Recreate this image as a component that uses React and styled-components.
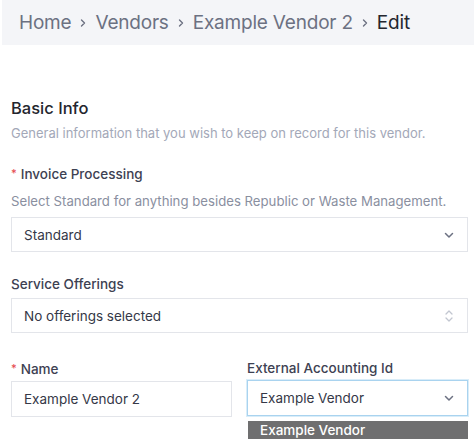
import styled, { createGlobalStyle } from 'styled-components'

const GlobalStyle = createGlobalStyle`
	html, body { margin: 0; padding: 0; background: #ffffff; }
	body { font-family: Inter, "Open Sans", sans-serif; }
`

const Page = styled.div`
	width: 474px;
	height: 445px;
	overflow: hidden;
	background: #fff;
`

const Breadcrumb = styled.nav`
	display: flex;
	align-items: center;
	gap: 8px;
	height: 45px;
	margin-left: 2px;
	padding: 0 17px;
	background: #f4f5f8;
	font-size: 19px;
	letter-spacing: -0.2px;
	color: #6c7182;
`

const Crumb = styled.span`
	color: ${props => props.current ? '#24262f' : '#6c7182'};
`

const Sep = styled.span`
	display: flex;
	align-items: center;
`

const Section = styled.section`
	padding: 52px 6px 0 11px;
`

const Title = styled.h2`
	margin: 0;
	font-size: 16.5px;
	font-weight: 500;
	color: #23252d;
	line-height: 22px;
`

const Subtitle = styled.p`
	margin: 5px 0 0;
	font-size: 13px;
	color: #a3a8b8;
	line-height: 18px;
`

const Field = styled.div`
	margin-top: ${props => props.top || 0}px;
	display: flex;
	flex-direction: column;
`

const Label = styled.label`
	font-size: 13.5px;
	font-weight: 500;
	color: #3d4152;
	line-height: 18px;
`

const Req = styled.span`
	color: #e5484d;
	font-size: 11px;
	vertical-align: 2px;
	margin-right: 4px;
`

const Help = styled.div`
	margin-top: 9px;
	font-size: 13.2px;
	color: #8a8f9f;
	line-height: 18px;
`

const Box = styled.div`
	margin-top: ${props => props.gap || 0}px;
	height: ${props => props.h || 35}px;
	box-sizing: border-box;
	display: flex;
	align-items: center;
	justify-content: space-between;
	padding: 0 12px 0 12px;
	border: 1px solid ${props => props.focus ? '#a9d3ef' : '#e3e5ea'};
	box-shadow: ${props => props.focus ? '0 0 0 1px #d9edf9' : 'none'};
	font-size: 13.5px;
	color: #353847;
	background: #fff;
`

const Row = styled.div`
	margin-top: 26px;
	display: grid;
	grid-template-columns: 221px 221px;
	gap: 15px;
`

const Cell = styled.div`
	position: relative;
	display: flex;
	flex-direction: column;
`

// the open option list of the focused select
const Menu = styled.div`
	position: absolute;
	left: 1px;
	right: 0;
	top: 62px;
	height: 18px;
	padding-left: 12px;
	display: flex;
	align-items: center;
	background: #6f6f70;
	color: #fff;
	font-size: 13.5px;
	font-weight: 500;
`

function Chevron() {
	return (
		<svg width="12" height="12" viewBox="0 0 12 12" fill="none" stroke="#6c7182" strokeWidth="1.5" strokeLinecap="round" strokeLinejoin="round">
			<path d="M2.5 4.5 L6 8 L9.5 4.5" />
		</svg>
	)
}

function Arrow() {
	return (
		<svg width="8" height="12" viewBox="0 0 8 12" fill="none" stroke="#6c7182" strokeWidth="1.4" strokeLinecap="round" strokeLinejoin="round">
			<path d="M2.5 3 L5.5 6 L2.5 9" />
		</svg>
	)
}

function UpDown() {
	return (
		<svg width="12" height="16" viewBox="0 0 12 16" fill="none" stroke="#c2c6d0" strokeWidth="1.3" strokeLinecap="round" strokeLinejoin="round">
			<path d="M3 6 L6 3 L9 6" />
			<path d="M3 10 L6 13 L9 10" />
		</svg>
	)
}

export default function App() {
	return (
		<Page>
			<GlobalStyle />
			<Breadcrumb>
				<Crumb>Home</Crumb><Sep><Arrow /></Sep>
				<Crumb>Vendors</Crumb><Sep><Arrow /></Sep>
				<Crumb>Example Vendor 2</Crumb><Sep><Arrow /></Sep>
				<Crumb current>Edit</Crumb>
			</Breadcrumb>

			<Section>
				<Title>Basic Info</Title>
				<Subtitle>General information that you wish to keep on record for this vendor.</Subtitle>

				<Field top={22}>
					<Label><Req>*</Req>Invoice Processing</Label>
					<Help>Select Standard for anything besides Republic or Waste Management.</Help>
					<Box gap={7}>Standard<Chevron /></Box>
				</Field>

				<Field top={23}>
					<Label>Service Offerings</Label>
					<Box gap={5}>No offerings selected<UpDown /></Box>
				</Field>

				<Row>
					<Cell>
						<Label><Req>*</Req>Name</Label>
						<Box gap={3} h={36}>Example Vendor 2</Box>
					</Cell>
					<Cell>
						<Label>External Accounting Id</Label>
						<Box gap={3} h={36} focus>Example Vendor<Chevron /></Box>
						<Menu>Example Vendor</Menu>
					</Cell>
				</Row>
			</Section>
		</Page>
	)
}
